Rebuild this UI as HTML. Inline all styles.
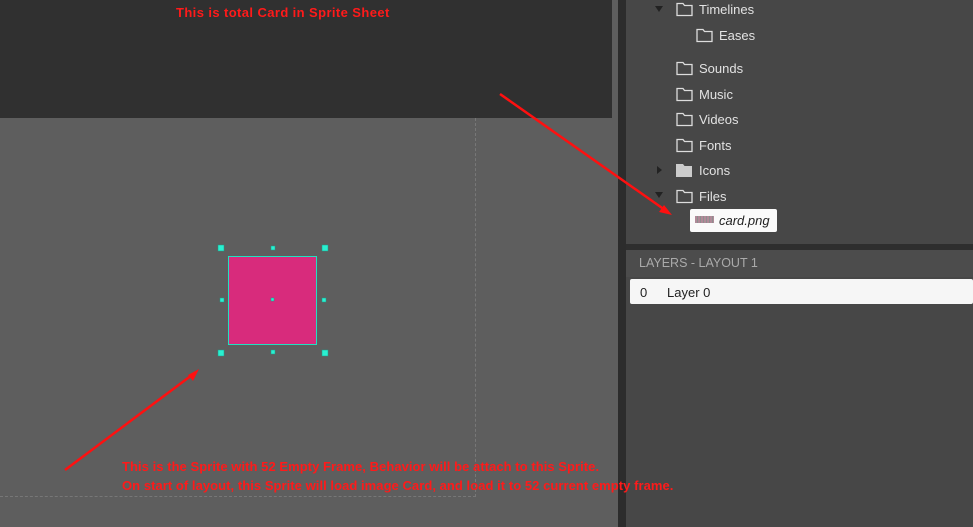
<!DOCTYPE html>
<html><head><style>
body{margin:0;width:973px;height:527px;overflow:hidden;background:#5e5e5e;position:relative;font-family:"Liberation Sans",sans-serif}
div{position:absolute;box-sizing:border-box}
.t{color:#e2e2e2;font-size:13px}
.red{color:#ff1a1a;font-size:13px;font-weight:bold;letter-spacing:0.3px}
</style></head><body>
<div style="left:0;top:0;width:612px;height:118px;background:#303030"></div>
<div style="left:475px;top:118px;width:0;height:379px;border-left:1px dashed #777"></div>
<div style="left:0;top:496px;width:476px;height:0;border-top:1px dashed #777"></div>
<div style="left:618px;top:0;width:8px;height:527px;background:#2c2c2c"></div>
<div style="left:626px;top:0;width:347px;height:244px;background:#474747"></div>
<div style="left:626px;top:244px;width:347px;height:6px;background:#2e2e2e"></div>
<div style="left:626px;top:250px;width:347px;height:277px;background:#474747"></div>
<div style="left:626px;top:250px;width:347px;height:27px;background:#4c4c4c"></div>
<div class="t" style="left:639px;top:256px;color:#aaa;font-size:12.5px">LAYERS - LAYOUT 1</div>
<div style="left:630px;top:279px;width:343px;height:25px;background:#f6f6f6;border-radius:2px"></div>
<div class="t" style="left:640px;top:285px;color:#222">0</div>
<div class="t" style="left:667px;top:285px;color:#222">Layer 0</div>
<div style="left:690px;top:209px;width:87px;height:23px;background:#fafafa;border-radius:2px"></div>
<div style="left:695px;top:216px;width:19px;height:7px;background:repeating-linear-gradient(90deg,#b08a98 0 2px,#8e8e8e 2px 3px)"></div>
<div class="t" style="left:719px;top:213px;color:#222;font-style:italic">card.png</div>
<svg width="973" height="527" style="position:absolute;left:0;top:0">
<g fill="none" stroke="#ddd" stroke-width="1.3">
<path d="M677 3.5h6l1.5 2h7.5v10h-15z"/>
<path d="M697 29.5h6l1.5 2h7.5v10h-15z"/>
<path d="M677 62.5h6l1.5 2h7.5v10h-15z"/>
<path d="M677 88.5h6l1.5 2h7.5v10h-15z"/>
<path d="M677 113.5h6l1.5 2h7.5v10h-15z"/>
<path d="M677 139.5h6l1.5 2h7.5v10h-15z"/>
<path d="M677 190.5h6l1.5 2h7.5v10h-15z"/>
</g>
<path d="M676 164h7l1.5 2h7.5v11h-16z" fill="#ccc"/>
<g fill="#222"><path d="M655 6h8l-4 6z"/><path d="M655 192h8l-4 6z"/><path d="M657 166v8l5-4z"/></g>
<rect x="228.5" y="256.5" width="88" height="88" fill="#d82b7c" stroke="#22e0c0"/>
<g fill="#2af0d0" stroke="#1a9a88" stroke-width="0.5">
<rect x="218" y="245" width="6" height="6"/><rect x="322" y="245" width="6" height="6"/>
<rect x="218" y="350" width="6" height="6"/><rect x="322" y="350" width="6" height="6"/>
<rect x="271" y="246" width="4" height="4"/><rect x="271" y="350" width="4" height="4"/>
<rect x="220" y="298" width="4" height="4"/><rect x="322" y="298" width="4" height="4"/>
<rect x="271" y="298" width="3" height="3"/>
</g>
<g stroke="#ff1010" stroke-width="2.5" fill="#ff1010">
<line x1="500" y1="94" x2="665" y2="210"/>
<path d="M672 215l-13-3 5-7z" stroke="none"/>
<line x1="65" y1="470" x2="192" y2="375"/>
<path d="M199 369l-6 12-5-6z" stroke="none"/>
</g>
</svg>
<div class="t" style="left:699px;top:2px">Timelines</div>
<div class="t" style="left:719px;top:28px">Eases</div>
<div class="t" style="left:699px;top:61px">Sounds</div>
<div class="t" style="left:699px;top:87px">Music</div>
<div class="t" style="left:699px;top:112px">Videos</div>
<div class="t" style="left:699px;top:138px">Fonts</div>
<div class="t" style="left:699px;top:163px">Icons</div>
<div class="t" style="left:699px;top:189px">Files</div>
<div class="red" style="left:176px;top:5px;letter-spacing:0.4px">This is total Card in Sprite Sheet</div>
<div class="red" style="left:122px;top:457px;line-height:19px;white-space:nowrap;letter-spacing:0.05px">This is the Sprite with 52 Empty Frame, Behavior will be attach to this Sprite.<br>On start of layout, this Sprite will load image Card, and load it to 52 current empty frame.</div>
</body></html>
